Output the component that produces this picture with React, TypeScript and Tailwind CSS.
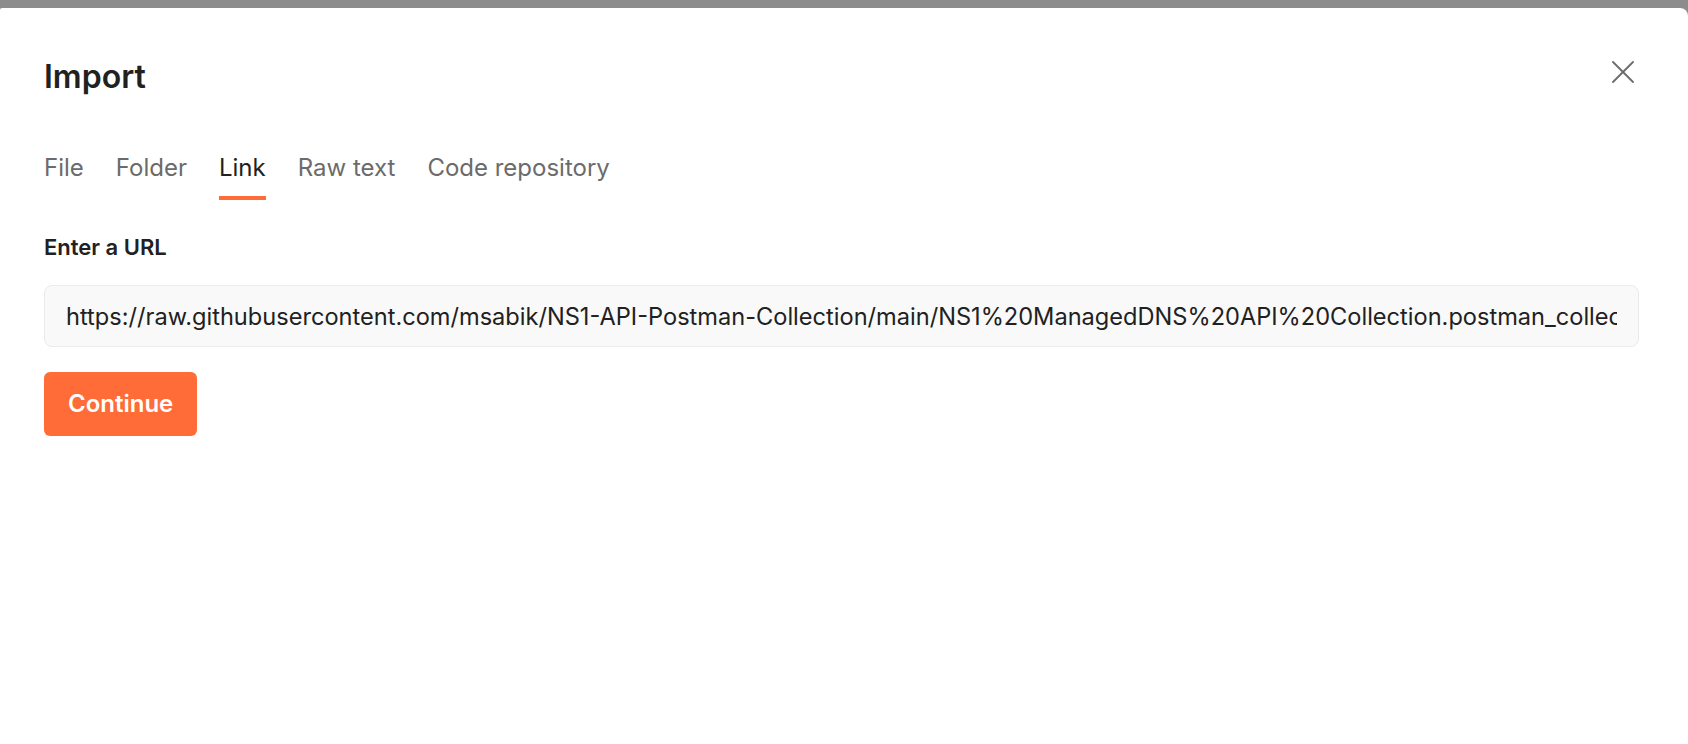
const TABS = ['File', 'Folder', 'Link', 'Raw text', 'Code repository']

const IMPORT_URL =
  'https://raw.githubusercontent.com/msabik/NS1-API-Postman-Collection/main/NS1%20ManagedDNS%20API%20Collection.postman_collection.json'

function CloseIcon() {
  return (
    <svg width="22" height="22" viewBox="0 0 22 22" fill="none" stroke="#6b6b6b" strokeWidth="1.8" strokeLinecap="round">
      <line x1="1" y1="1" x2="21" y2="21" />
      <line x1="21" y1="1" x2="1" y2="21" />
    </svg>
  )
}

export default function App() {
  const active = 'Link'

  return (
    <div className="min-h-[744px] bg-[#8c8c8c] pt-[8px] font-['Inter',sans-serif]">
      <div className="min-h-[736px] bg-white rounded-tr-[8px] rounded-tl-[2px] pl-[44px] pr-[49px] pt-[49px]">
        <div className="flex items-start justify-between">
          <h1 className="text-[32px] leading-[40px] font-semibold text-[#212121]">Import</h1>
          <button className="w-8 h-8 -mt-px flex items-center justify-center">
            <CloseIcon />
          </button>
        </div>

        <div className="mt-[57px] flex gap-[32px]">
          {TABS.map((tab) => (
            <button
              key={tab}
              className={`pb-[14px] border-b-4 text-[24px] leading-[28px] ${
                tab === active ? 'border-[#ff6c37] text-[#212121]' : 'border-transparent text-[#6b6b6b]'
              }`}
            >
              {tab}
            </button>
          ))}
        </div>

        <label className="block mt-[35px] text-[22px] leading-[24px] font-semibold text-[#212121]">
          Enter a URL
        </label>

        <input
          readOnly
          value={IMPORT_URL}
          className="mt-[26px] block w-full h-[62px] px-[21px] rounded-[8px] border border-[#ebebeb] bg-[#f9f9f9] text-[23.6px] text-[#212121] outline-none"
        />

        <button className="mt-[25px] h-[64px] px-[24px] rounded-[6px] bg-[#ff6c37] text-white text-[24px] font-semibold">
          Continue
        </button>
      </div>
    </div>
  )
}
